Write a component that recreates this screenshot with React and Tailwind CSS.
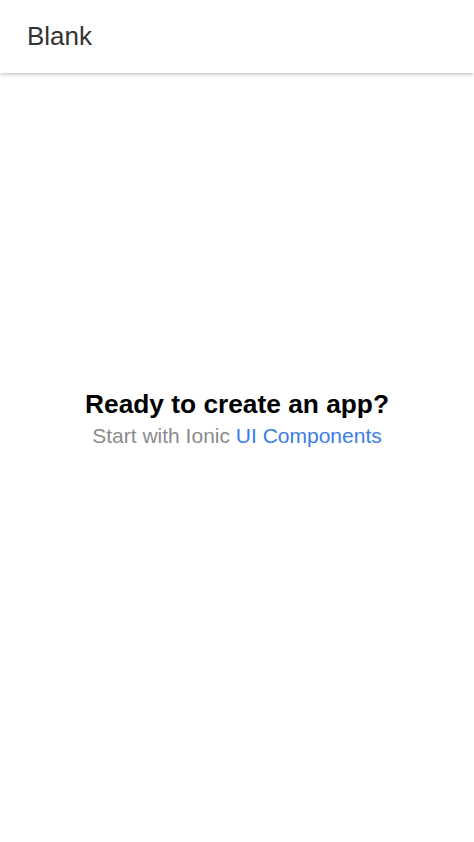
import React from 'react';

export default function App() {
  return (
    <div className="flex min-h-screen flex-col bg-white font-['Liberation_Sans',Arial,sans-serif]">
      {/* Header */}
      <header className="relative z-10 flex h-[73px] items-center bg-white pl-[27px] shadow-[0_2px_3px_-1px_rgba(0,0,0,0.16),0_3px_4px_0_rgba(0,0,0,0.08)]">
        <h1 className="text-[26px] font-normal text-[#333333]">Blank</h1>
      </header>

      {/* Content */}
      <main className="flex flex-1 flex-col items-center pt-[315px] text-center">
        <strong className="block text-[26.3px] leading-[33px] font-bold text-black">
          Ready to create an app?
        </strong>
        <p className="m-0 text-[21px] leading-[29px] text-[#8c8c8c]">
          Start with Ionic{' '}
          <a href="#" className="text-[#3a7ce8] no-underline">
            UI Components
          </a>
        </p>
      </main>
    </div>
  );
}
